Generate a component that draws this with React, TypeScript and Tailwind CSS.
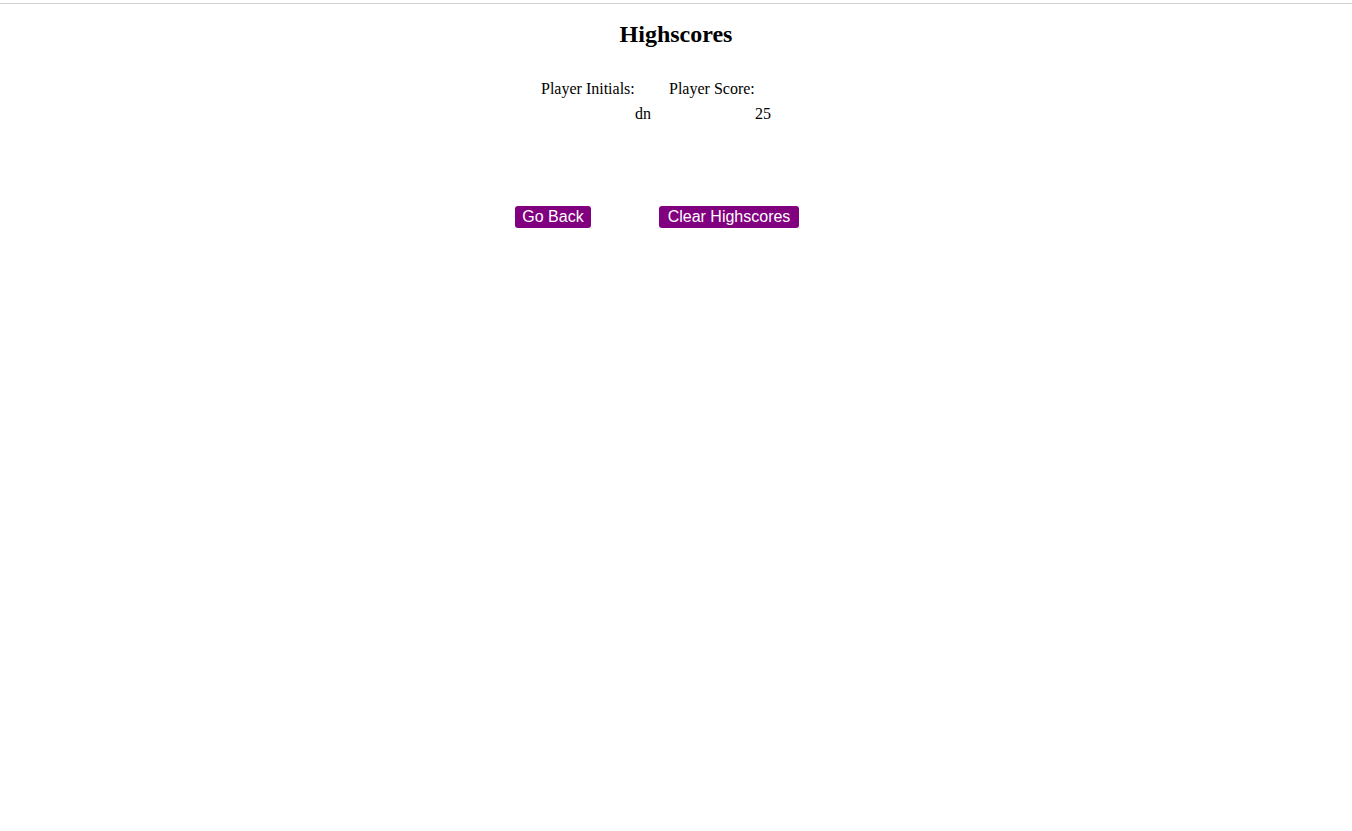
export default function App() {
  const scores = [{ initials: "dn", score: 25 }];
  return (
    <div className="min-h-[831px] bg-white text-black" style={{ fontFamily: '"Liberation Serif", "Times New Roman", serif' }}>
      <div className="h-[3px]" />
      <div className="border-t border-[#d3d3d3]" />

      <h2 className="mt-[16px] text-center text-[24px] font-bold leading-[28px]">Highscores</h2>

      <div className="mt-[32px] flex justify-center pr-[40px]">
        <div className="flex gap-[18px] text-[16px] leading-[18px]">
          <div className="flex w-[110px] flex-col gap-[7px]">
            <span>Player Initials:</span>
            {scores.map((s) => (
              <span key={s.initials} className="text-right">
                {s.initials}
              </span>
            ))}
          </div>
          <div className="flex w-[102px] flex-col gap-[7px]">
            <span>Player Score:</span>
            {scores.map((s) => (
              <span key={s.initials} className="text-right">
                {s.score}
              </span>
            ))}
          </div>
        </div>
      </div>

      <div
        className="mt-[83px] flex justify-center gap-[68px] pr-[38px]"
        style={{ fontFamily: '"Liberation Sans", Arial, sans-serif' }}
      >
        <button className="h-[22px] w-[76px] rounded-[3px] bg-[#800080] text-[16px] leading-[18px] text-white">
          Go Back
        </button>
        <button className="h-[22px] w-[140px] rounded-[3px] bg-[#800080] text-[16px] leading-[18px] text-white">
          Clear Highscores
        </button>
      </div>
    </div>
  );
}
